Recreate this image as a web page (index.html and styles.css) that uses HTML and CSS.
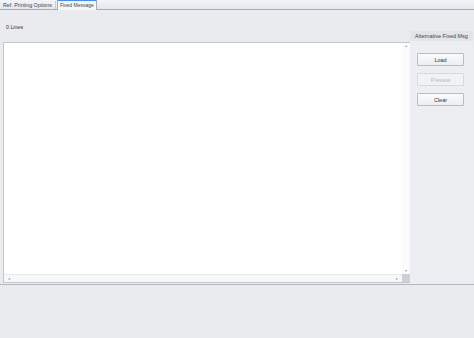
FILE: index.html
```html
<!DOCTYPE html>
<html>
<head>
<meta charset="utf-8">
<link rel="stylesheet" href="styles.css">
</head>
<body>
<div class="app">
  <div class="tabstrip">
    <div class="tab">Ref. Printing Options</div>
    <div class="tab active">Fixed Message</div>
  </div>
  <div class="main">
    <div class="left">
      <div class="count">0 Lines</div>
      <div class="editor">
        <div class="editor-body">
          <div class="text"></div>
          <div class="vscroll">
            <span class="arr up">&#9652;</span>
            <span class="arr down">&#9662;</span>
          </div>
        </div>
        <div class="hrow">
          <div class="hscroll">
            <span class="arr">&#9666;</span>
            <span class="arr">&#9656;</span>
          </div>
          <div class="corner"></div>
        </div>
      </div>
    </div>
    <div class="side">
      <div class="side-head">Alternative Fixed Msg</div>
      <div class="side-body">
        <button class="btn">Load</button>
        <button class="btn disabled">Preview</button>
        <button class="btn">Clear</button>
      </div>
    </div>
  </div>
  <div class="footer"></div>
</div>
</body>
</html>
```
FILE: styles.css
```css
html, body {
  margin: 0;
  padding: 0;
  width: 474px;
  height: 338px;
  overflow: hidden;
  background: #e9ebef;
  font-family: "Liberation Sans", Arial, sans-serif;
  font-size: 5.3px;
  color: #333;
}
.app {
  display: flex;
  flex-direction: column;
  height: 338px;
}
.tabstrip {
  display: flex;
  align-items: flex-end;
  height: 9px;
  padding-left: 1px;
  background: linear-gradient(#f3f4f7, #e4e7ec);
  border-bottom: 1px solid #a9adb4;
  gap: 1px;
}
.tab {
  height: 8px;
  line-height: 8px;
  padding: 0 3px 0 2px;
  color: #444;
  border-right: 1px solid #c8ccd2;
  white-space: nowrap;
}
.tab.active {
  background: #f6f7f9;
  border: 1px solid #a9adb4;
  border-top: 1px solid #4e8de0;
  border-bottom: none;
  height: 9px;
  margin-bottom: -1px;
  line-height: 9px;
  padding: 0 2px;
  font-size: 5px;
}
.main {
  display: flex;
  height: 274px;
  border-bottom: 1px solid #b4b8be;
}
.left {
  display: flex;
  flex-direction: column;
  width: 407px;
  padding-left: 3px;
}
.count {
  height: 32px;
  line-height: 34px;
  padding-left: 3px;
}
.editor {
  flex: 1;
  display: flex;
  flex-direction: column;
  background: #fff;
  border: 1px solid #c3c7cd;
  border-right: none;
  margin-bottom: 1px;
}
.editor-body {
  flex: 1;
  display: flex;
}
.text {
  flex: 1;
}
.vscroll {
  width: 8px;
  display: flex;
  flex-direction: column;
  justify-content: space-between;
  align-items: center;
  background: #fbfbfc;
}
.hrow {
  display: flex;
  height: 8px;
}
.hscroll {
  flex: 1;
  display: flex;
  justify-content: space-between;
  align-items: center;
  padding: 0 4px;
  background: #f7f8f9;
  border-top: 1px solid #e6e8eb;
}
.corner {
  width: 8px;
  background: #c9d2d6;
}
.arr {
  font-size: 4px;
  color: #9aa0a6;
  line-height: 6px;
}
.side {
  width: 63px;
  display: flex;
  flex-direction: column;
  padding-top: 21px;
}
.side-head {
  height: 10px;
  line-height: 10px;
  text-align: center;
  background: #e1e4e9;
  color: #444;
  white-space: nowrap;
  font-size: 5.5px;
}
.side-body {
  flex: 1;
  display: flex;
  flex-direction: column;
  align-items: center;
  gap: 7px;
  padding-top: 12px;
  padding-right: 2px;
  background: #eceef2;
}
.btn {
  width: 47px;
  height: 13px;
  padding: 0;
  font-family: "Liberation Sans", Arial, sans-serif;
  font-size: 5.5px;
  color: #333;
  background: linear-gradient(#fafbfc, #eceef1);
  border: 1px solid #b9bdc3;
  border-radius: 1px;
}
.btn.disabled {
  color: #b4b8bd;
  border-color: #d6d9dd;
  background: #f1f2f4;
}
.footer {
  flex: 1;
  background: #e9ebef;
}
```
